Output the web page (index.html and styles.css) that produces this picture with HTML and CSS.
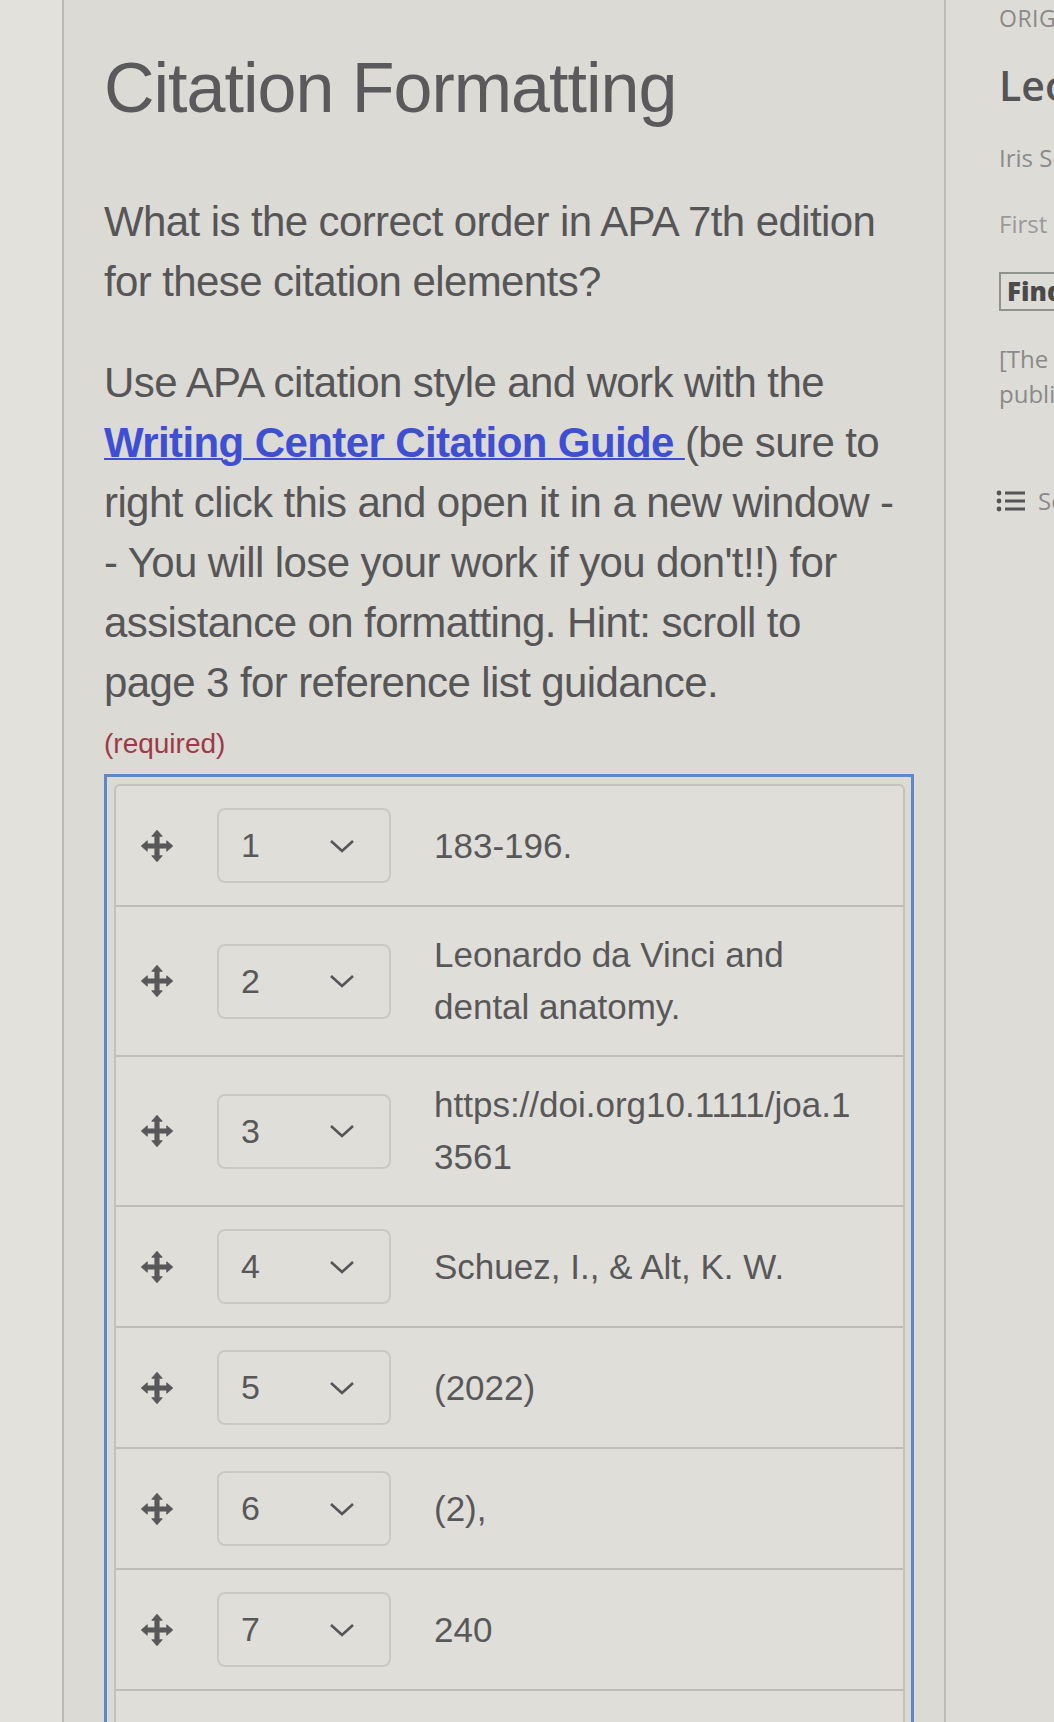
FILE: index.html
```html
<!DOCTYPE html>
<html lang="en">
<head>
    <meta charset="UTF-8">
    <meta name="viewport" content="width=device-width, initial-scale=1.0">
    <title>Citation Formatting</title>
    <link rel="stylesheet" href="styles.css">
</head>
<body>
    <div class="page">
        <div class="gutter"></div>

        <main class="question">
            <h1 class="title">Citation Formatting</h1>
            <p class="prompt">What is the correct order in APA 7th edition<br>for these citation elements?</p>
            <p class="prompt">Use APA citation style and work with the<br><a href="#" class="guide">Writing Center Citation Guide </a>(be sure to<br>right click this and open it in a new window -<br>- You will lose your work if you don't!!) for<br>assistance on formatting. Hint: scroll to<br>page 3 for reference list guidance.</p>
            <div class="required">(required)</div>

            <div class="sort-box">
                <ul class="sort-list">
                    <li class="sort-item">
                        <span class="handle"><svg viewBox="0 0 24 24" width="36" height="36"><path d="M12 1.5 L15.5 5.5 H13.4 V10.6 H18.5 V8.5 L22.5 12 L18.5 15.5 V13.4 H13.4 V18.5 H15.5 L12 22.5 L8.5 18.5 H10.6 V13.4 H5.5 V15.5 L1.5 12 L5.5 8.5 V10.6 H10.6 V5.5 H8.5 Z" fill="#58585a" stroke="#58585a" stroke-width="0.6" stroke-linejoin="round"/></svg></span>
                        <div class="order-select"><span>1</span><svg viewBox="0 0 26 14" width="26" height="14"><polyline points="2,2 13,12 24,2" fill="none" stroke="#555557" stroke-width="2.6"/></svg></div>
                        <div class="item-text">183-196.</div>
                    </li>
                    <li class="sort-item">
                        <span class="handle"><svg viewBox="0 0 24 24" width="36" height="36"><path d="M12 1.5 L15.5 5.5 H13.4 V10.6 H18.5 V8.5 L22.5 12 L18.5 15.5 V13.4 H13.4 V18.5 H15.5 L12 22.5 L8.5 18.5 H10.6 V13.4 H5.5 V15.5 L1.5 12 L5.5 8.5 V10.6 H10.6 V5.5 H8.5 Z" fill="#58585a" stroke="#58585a" stroke-width="0.6" stroke-linejoin="round"/></svg></span>
                        <div class="order-select"><span>2</span><svg viewBox="0 0 26 14" width="26" height="14"><polyline points="2,2 13,12 24,2" fill="none" stroke="#555557" stroke-width="2.6"/></svg></div>
                        <div class="item-text">Leonardo da Vinci and dental anatomy.</div>
                    </li>
                    <li class="sort-item">
                        <span class="handle"><svg viewBox="0 0 24 24" width="36" height="36"><path d="M12 1.5 L15.5 5.5 H13.4 V10.6 H18.5 V8.5 L22.5 12 L18.5 15.5 V13.4 H13.4 V18.5 H15.5 L12 22.5 L8.5 18.5 H10.6 V13.4 H5.5 V15.5 L1.5 12 L5.5 8.5 V10.6 H10.6 V5.5 H8.5 Z" fill="#58585a" stroke="#58585a" stroke-width="0.6" stroke-linejoin="round"/></svg></span>
                        <div class="order-select"><span>3</span><svg viewBox="0 0 26 14" width="26" height="14"><polyline points="2,2 13,12 24,2" fill="none" stroke="#555557" stroke-width="2.6"/></svg></div>
                        <div class="item-text url">https://doi.org10.1111/joa.13561</div>
                    </li>
                    <li class="sort-item">
                        <span class="handle"><svg viewBox="0 0 24 24" width="36" height="36"><path d="M12 1.5 L15.5 5.5 H13.4 V10.6 H18.5 V8.5 L22.5 12 L18.5 15.5 V13.4 H13.4 V18.5 H15.5 L12 22.5 L8.5 18.5 H10.6 V13.4 H5.5 V15.5 L1.5 12 L5.5 8.5 V10.6 H10.6 V5.5 H8.5 Z" fill="#58585a" stroke="#58585a" stroke-width="0.6" stroke-linejoin="round"/></svg></span>
                        <div class="order-select"><span>4</span><svg viewBox="0 0 26 14" width="26" height="14"><polyline points="2,2 13,12 24,2" fill="none" stroke="#555557" stroke-width="2.6"/></svg></div>
                        <div class="item-text">Schuez, I., &amp; Alt, K. W.</div>
                    </li>
                    <li class="sort-item">
                        <span class="handle"><svg viewBox="0 0 24 24" width="36" height="36"><path d="M12 1.5 L15.5 5.5 H13.4 V10.6 H18.5 V8.5 L22.5 12 L18.5 15.5 V13.4 H13.4 V18.5 H15.5 L12 22.5 L8.5 18.5 H10.6 V13.4 H5.5 V15.5 L1.5 12 L5.5 8.5 V10.6 H10.6 V5.5 H8.5 Z" fill="#58585a" stroke="#58585a" stroke-width="0.6" stroke-linejoin="round"/></svg></span>
                        <div class="order-select"><span>5</span><svg viewBox="0 0 26 14" width="26" height="14"><polyline points="2,2 13,12 24,2" fill="none" stroke="#555557" stroke-width="2.6"/></svg></div>
                        <div class="item-text">(2022)</div>
                    </li>
                    <li class="sort-item">
                        <span class="handle"><svg viewBox="0 0 24 24" width="36" height="36"><path d="M12 1.5 L15.5 5.5 H13.4 V10.6 H18.5 V8.5 L22.5 12 L18.5 15.5 V13.4 H13.4 V18.5 H15.5 L12 22.5 L8.5 18.5 H10.6 V13.4 H5.5 V15.5 L1.5 12 L5.5 8.5 V10.6 H10.6 V5.5 H8.5 Z" fill="#58585a" stroke="#58585a" stroke-width="0.6" stroke-linejoin="round"/></svg></span>
                        <div class="order-select"><span>6</span><svg viewBox="0 0 26 14" width="26" height="14"><polyline points="2,2 13,12 24,2" fill="none" stroke="#555557" stroke-width="2.6"/></svg></div>
                        <div class="item-text">(2),</div>
                    </li>
                    <li class="sort-item">
                        <span class="handle"><svg viewBox="0 0 24 24" width="36" height="36"><path d="M12 1.5 L15.5 5.5 H13.4 V10.6 H18.5 V8.5 L22.5 12 L18.5 15.5 V13.4 H13.4 V18.5 H15.5 L12 22.5 L8.5 18.5 H10.6 V13.4 H5.5 V15.5 L1.5 12 L5.5 8.5 V10.6 H10.6 V5.5 H8.5 Z" fill="#58585a" stroke="#58585a" stroke-width="0.6" stroke-linejoin="round"/></svg></span>
                        <div class="order-select"><span>7</span><svg viewBox="0 0 26 14" width="26" height="14"><polyline points="2,2 13,12 24,2" fill="none" stroke="#555557" stroke-width="2.6"/></svg></div>
                        <div class="item-text">240</div>
                    </li>
                </ul>
            </div>
        </main>

        <aside class="sidebar">
            <div class="kicker">ORIGINAL ARTICLE</div>
            <div class="article-title">Leonardo da Vinci and dental anatomy</div>
            <div class="authors">Iris Schuez, Kurt W. Alt</div>
            <div class="published">First published: 20 October 2021</div>
            <div class="find-btn">Find it</div>
            <div class="note">
                <span>[The first page of the article is</span>
                <span>published as an abstract]</span>
            </div>
            <div class="sections">
                <svg class="sections-icon" viewBox="0 0 30 24" width="30" height="24"><circle cx="3" cy="4" r="2.4" fill="#555557"/><circle cx="3" cy="12" r="2.4" fill="#555557"/><circle cx="3" cy="20" r="2.4" fill="#555557"/><rect x="9" y="2.5" width="20" height="3" fill="#555557"/><rect x="9" y="10.5" width="20" height="3" fill="#555557"/><rect x="9" y="18.5" width="20" height="3" fill="#555557"/></svg>
                <span>Sections</span>
            </div>
        </aside>
    </div>
</body>
</html>
```

FILE: styles.css
```css
* {
    box-sizing: border-box;
}
body {
    margin: 0;
    font-family: "Liberation Sans", Arial, sans-serif;
    background-color: #dedcd6;
    color: #565658;
}
.page {
    display: flex;
    height: 100vh;
    overflow: hidden;
}
.gutter {
    flex: 0 0 64px;
    background: #e3e1dc;
    border-right: 2px solid #bab8b2;
}

/* main question panel */
.question {
    flex: 0 0 882px;
    padding: 48px 0 0 40px;
    background: #dcdad4;
    border-right: 2px solid #bdbbb5;
}
.title {
    margin: 0;
    font-size: 70px;
    line-height: 80px;
    font-weight: normal;
    letter-spacing: -1px;
    color: #5a5a5c;
}
.prompt {
    margin: 64px 0 0;
    font-size: 42px;
    line-height: 60px;
    letter-spacing: -0.6px;
}
.prompt + .prompt {
    margin-top: 41px;
}
.guide {
    color: #3f4fd4;
    font-weight: bold;
    text-decoration: underline;
    text-decoration-thickness: 2px;
}
.required {
    margin-top: 14px;
    font-size: 28px;
    line-height: 34px;
    color: #9b3b47;
}

/* sortable list */
.sort-box {
    margin-top: 13px;
    width: 810px;
    border: 3px solid #5f86c6;
    border-bottom: none;
    padding: 7px 6px 0 7px;
}
.sort-list {
    list-style: none;
    margin: 0;
    padding: 0 0 60px;
    border: 2px solid #c4c2bc;
    border-radius: 6px;
    background: #e0ded9;
}
.sort-item {
    display: flex;
    align-items: center;
    padding: 22px 0;
    border-bottom: 2px solid #bebcb6;
}
.handle {
    display: flex;
    align-items: center;
    justify-content: center;
    margin-left: 22px;
    width: 37px;
    height: 38px;
}
.order-select {
    display: flex;
    align-items: center;
    justify-content: space-between;
    margin-left: 42px;
    width: 174px;
    height: 75px;
    padding: 0 34px 0 22px;
    border: 2px solid #cbc9c3;
    border-radius: 8px;
    font-size: 34px;
    color: #58585a;
}
.item-text {
    flex: 1;
    margin-left: 43px;
    padding-right: 34px;
    font-size: 35px;
    line-height: 52px;
    color: #58585a;
}
.url {
    word-break: break-all;
}

/* right article panel */
.sidebar {
    flex: 1;
    padding-left: 53px;
    overflow: hidden;
    white-space: nowrap;
    font-family: "Open Sans", sans-serif;
    color: #8a8a8a;
}
.kicker {
    margin-top: 4px;
    font-size: 23px;
    line-height: 28px;
    letter-spacing: 0.5px;
}
.article-title {
    margin-top: 28px;
    font-size: 41px;
    line-height: 50px;
    font-weight: 600;
    color: #555557;
}
.authors {
    margin-top: 33px;
    font-size: 24px;
    line-height: 30px;
}
.published {
    margin-top: 36px;
    font-size: 24px;
    line-height: 30px;
    color: #9a9a9a;
}
.find-btn {
    width: fit-content;
    margin-top: 33px;
    padding: 1px 6px;
    border: 2px solid #8e948c;
    font-size: 26px;
    line-height: 33px;
    font-weight: 800;
    color: #4a4a4a;
}
.note {
    margin-top: 30px;
    font-size: 24px;
    line-height: 35px;
}
.note span {
    display: block;
}
.sections {
    display: flex;
    align-items: center;
    gap: 12px;
    margin-top: 72px;
    margin-left: -3px;
    font-size: 24px;
    line-height: 36px;
}
.sections-icon {
    flex-shrink: 0;
}
```
